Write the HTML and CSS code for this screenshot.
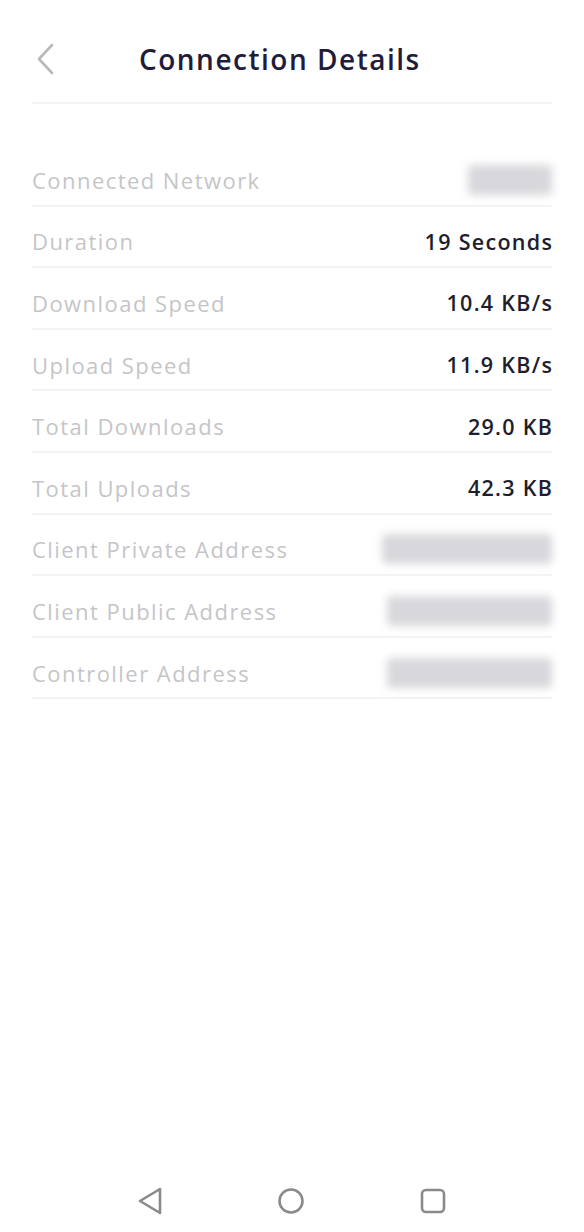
FILE: index.html
```html
<!DOCTYPE html>
<html>
<head>
<meta charset="utf-8">
<link rel="stylesheet" href="styles.css">
</head>
<body>
<div class="screen">
  <header class="header">
    <svg class="back" width="22" height="34" viewBox="0 0 22 34"><path d="M18 3 L5 17 L18 31" fill="none" stroke="#b9b9bd" stroke-width="2.6" stroke-linecap="round" stroke-linejoin="round"/></svg>
    <h1 class="title">Connection Details</h1>
  </header>
  <div class="list">
    <div class="row"><span class="label">Connected Network</span><span class="blur b1"></span></div>
    <div class="row"><span class="label">Duration</span><span class="value">19 Seconds</span></div>
    <div class="row"><span class="label">Download Speed</span><span class="value">10.4 KB/s</span></div>
    <div class="row"><span class="label">Upload Speed</span><span class="value">11.9 KB/s</span></div>
    <div class="row"><span class="label">Total Downloads</span><span class="value">29.0 KB</span></div>
    <div class="row"><span class="label">Total Uploads</span><span class="value">42.3 KB</span></div>
    <div class="row"><span class="label">Client Private Address</span><span class="blur b2"></span></div>
    <div class="row"><span class="label">Client Public Address</span><span class="blur b3"></span></div>
    <div class="row"><span class="label">Controller Address</span><span class="blur b3"></span></div>
  </div>
  <nav class="navbar">
    <svg width="28" height="30" viewBox="0 0 28 30"><path d="M24 3 L24 27 L4 15 Z" fill="none" stroke="#8a8a8a" stroke-width="2.6" stroke-linejoin="round"/></svg>
    <svg width="30" height="30" viewBox="0 0 30 30"><circle cx="15" cy="15" r="11.5" fill="none" stroke="#8a8a8a" stroke-width="2.6"/></svg>
    <svg width="30" height="30" viewBox="0 0 30 30"><rect x="4" y="4" width="22" height="22" rx="4" fill="none" stroke="#8a8a8a" stroke-width="2.6"/></svg>
  </nav>
</div>
</body>
</html>
```
FILE: styles.css
```css
html, body {
  margin: 0;
  padding: 0;
  background: #ffffff;
}
.screen {
  width: 584px;
  height: 1232px;
  display: flex;
  flex-direction: column;
  font-family: "Open Sans", "DejaVu Sans", sans-serif;
}
.header {
  margin: 0 32px;
  height: 104px;
  border-bottom: 2px solid #f3f3f5;
  display: flex;
  align-items: center;
  box-sizing: border-box;
  padding-top: 16px;
}
.back {
  margin-left: 2px;
}
.title {
  margin: 0 0 0 83px;
  font-size: 28px;
  font-weight: 600;
  color: #1f1d3a;
  letter-spacing: 1.5px;
}
.list {
  margin: 41px 32px 0;
  display: flex;
  flex-direction: column;
}
.row {
  height: 61.6px;
  box-sizing: border-box;
  border-bottom: 2px solid #f3f3f5;
  display: flex;
  align-items: center;
  justify-content: space-between;
  padding-top: 10px;
}
.label {
  font-size: 22px;
  color: #c5c5c8;
  letter-spacing: 1.45px;
}
.value {
  font-size: 21.5px;
  font-weight: 600;
  color: #1e1e2e;
  letter-spacing: 1.3px;
  margin-right: -1.3px;
}
.blur {
  display: block;
  height: 30px;
  background: #d8d8dc;
  filter: blur(4px);
  border-radius: 4px;
}
.b1 { width: 84px; }
.b2 { width: 170px; }
.b3 { width: 165px; }
.navbar {
  margin-top: auto;
  height: 62px;
  display: flex;
  align-items: center;
  justify-content: space-between;
  padding: 0 136px 0 136px;
}
```
